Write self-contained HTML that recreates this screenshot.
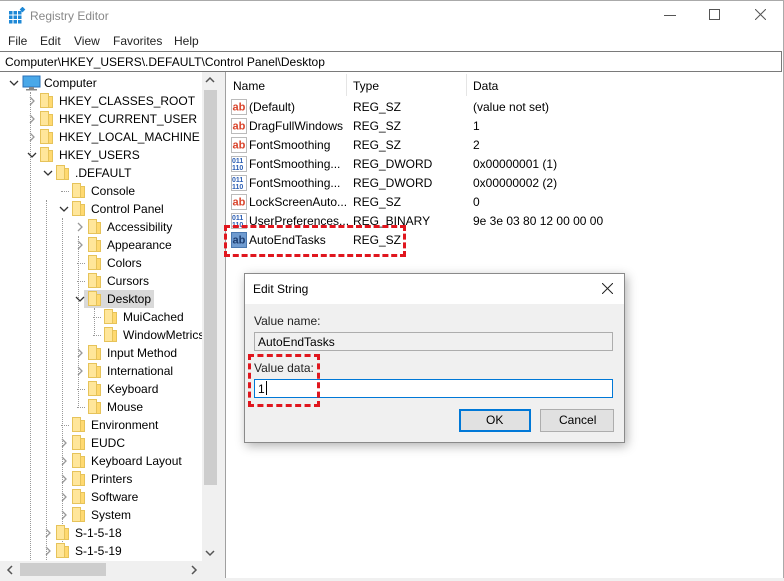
<!DOCTYPE html>
<html><head><meta charset="utf-8"><style>
body{margin:0;width:784px;height:581px;overflow:hidden;background:#fff;font-family:"Liberation Sans",sans-serif;font-size:12px;color:#000;position:relative}
.a{position:absolute;white-space:nowrap}
.t{position:absolute;white-space:nowrap;line-height:18px;height:18px}
</style></head><body>
<div class="a" style="left:0;top:0;width:783px;height:1px;background:#aaa"></div>
<div class="a" style="left:783px;top:0;width:1px;height:581px;background:#aaa"></div>
<svg class="a" style="left:9px;top:7px" width="17" height="17"><g fill="#1e88d6"><rect x="0" y="4" width="3.5" height="3.5"/><rect x="4.5" y="4" width="3.5" height="3.5"/><rect x="9" y="4" width="3.5" height="3.5"/><rect x="0" y="8.5" width="3.5" height="3.5"/><rect x="4.5" y="8.5" width="3.5" height="3.5"/><rect x="9" y="8.5" width="3.5" height="3.5"/><rect x="0" y="13" width="3.5" height="3.5"/><rect x="4.5" y="13" width="3.5" height="3.5"/><rect x="9" y="13" width="3.5" height="3.5"/><rect x="11.5" y="0.5" width="4" height="4" transform="rotate(45 13.5 2.5)"/></g></svg>
<div class="a" style="left:30px;top:9px;font-size:12px;color:#888">Registry Editor</div>
<div class="a" style="left:664px;top:15px;width:12px;height:1px;background:#555"></div>
<div class="a" style="left:709px;top:9px;width:9px;height:9px;border:1px solid #555"></div>
<svg class="a" style="left:755px;top:9px" width="11" height="11"><path d="M0 0L11 11M11 0L0 11" stroke="#555"/></svg>
<div class="a" style="left:8px;top:34px;color:#222">File</div>
<div class="a" style="left:40px;top:34px;color:#222">Edit</div>
<div class="a" style="left:74px;top:34px;color:#222">View</div>
<div class="a" style="left:113px;top:34px;color:#222">Favorites</div>
<div class="a" style="left:174px;top:34px;color:#222">Help</div>
<div class="a" style="left:0;top:51px;width:781px;height:19px;border:1px solid #7a7a7a;border-left:none"></div>
<div class="a" style="left:5px;top:55px">Computer\HKEY_USERS\.DEFAULT\Control Panel\Desktop</div>
<div class="a" style="left:0;top:72px;width:202px;height:489px;background:#fff;overflow:hidden">
<div class="a" style="left:84px;top:218px;width:70px;height:18px;background:#d9d9d9"></div>
<div class="a" style="left:30px;top:20px;height:470px;border-left:1px dotted #999"></div>
<div class="a" style="left:46px;top:128px;height:370px;border-left:1px dotted #999"></div>
<div class="a" style="left:62px;top:146px;height:340px;border-left:1px dotted #999"></div>
<div class="a" style="left:78px;top:164px;height:170px;border-left:1px dotted #999"></div>
<div class="a" style="left:94px;top:236px;height:26px;border-left:1px dotted #999"></div>
</div>
<div id="tree"></div>
<script>
var rows=[[0,"Computer",""],[1,"HKEY_CLASSES_ROOT",">"],[1,"HKEY_CURRENT_USER",">"],[1,"HKEY_LOCAL_MACHINE",">"],[1,"HKEY_USERS","v"],[2,".DEFAULT","v"],[3,"Console",""],[3,"Control Panel","v"],[4,"Accessibility",">"],[4,"Appearance",">"],[4,"Colors",""],[4,"Cursors",""],[4,"Desktop","v"],[5,"MuiCached",""],[5,"WindowMetrics",""],[4,"Input Method",">"],[4,"International",">"],[4,"Keyboard",""],[4,"Mouse",""],[3,"Environment",""],[3,"EUDC",">"],[3,"Keyboard Layout",">"],[3,"Printers",">"],[3,"Software",">"],[3,"System",">"],[2,"S-1-5-18",">"],[2,"S-1-5-19",">"]];
var h="";
rows.forEach(function(r,i){var top=74+18*i,L=r[0];
if(L==0){h+='<svg class="a" style="left:9px;top:'+(top+6)+'px" width="10" height="8"><path d="M1 1L5 5L9 1" stroke="#333" fill="none" stroke-width="1.3"/></svg>';
h+='<svg class="a" style="left:22px;top:'+(top+1)+'px" width="19" height="16"><rect x="1" y="1" width="17" height="11" fill="#4aa8e8" stroke="#2a70b8"/><rect x="7" y="12" width="5" height="2" fill="#888"/><rect x="4" y="14" width="11" height="1.5" fill="#888"/></svg>';
h+='<div class="t" style="left:44px;top:'+top+'px">Computer</div>';return;}
var fx=24+16*L,tx=fx+19,cx=fx-12;
if(r[2]==">")h+='<svg class="a" style="left:'+cx+'px;top:'+(top+4)+'px" width="8" height="10"><path d="M2 1L6 5L2 9" stroke="#999" fill="none" stroke-width="1.3"/></svg>';
if(r[2]=="v")h+='<svg class="a" style="left:'+(cx-1)+'px;top:'+(top+6)+'px" width="10" height="8"><path d="M1 1L5 5L9 1" stroke="#333" fill="none" stroke-width="1.3"/></svg>';
if(r[2]=="")h+='<div class="a" style="left:'+(cx+1)+'px;top:'+(top+9)+'px;width:8px;border-top:1px dotted #999"></div>';
h+='<svg class="a" style="left:'+fx+'px;top:'+(top+1)+'px" width="13" height="17"><path d="M0.5 0.5H8.5V14.5H0.5Z" fill="#ffe69a" stroke="#e6c35a"/><path d="M8.5 3.5V14.5H12.5V3.5Z" fill="#ffd970" stroke="#e6c35a"/></svg>';
h+='<div class="t" style="left:'+tx+'px;top:'+top+'px">'+r[1]+'</div>';});
document.getElementById('tree').innerHTML='<div class="a" style="left:0;top:0;width:202px;height:561px;overflow:hidden">'+h+'</div>';
</script>
<div class="a" style="left:202px;top:72px;width:17px;height:489px;background:#f0f0f0"></div>
<div class="a" style="left:204px;top:90px;width:13px;height:395px;background:#cdcdcd"></div>
<svg class="a" style="left:205px;top:76px" width="10" height="8"><path d="M1 6L5 2L9 6" stroke="#555" fill="none" stroke-width="1.5"/></svg>
<svg class="a" style="left:205px;top:549px" width="10" height="8"><path d="M1 2L5 6L9 2" stroke="#555" fill="none" stroke-width="1.5"/></svg>
<div class="a" style="left:0;top:561px;width:219px;height:17px;background:#f0f0f0"></div>
<div class="a" style="left:20px;top:563px;width:86px;height:13px;background:#cdcdcd"></div>
<svg class="a" style="left:6px;top:565px" width="8" height="10"><path d="M6 1L2 5L6 9" stroke="#555" fill="none" stroke-width="1.5"/></svg>
<svg class="a" style="left:190px;top:565px" width="8" height="10"><path d="M2 1L6 5L2 9" stroke="#555" fill="none" stroke-width="1.5"/></svg>
<div class="a" style="left:0;top:578px;width:784px;height:3px;background:#f0f0f0"></div>
<div class="a" style="left:219px;top:72px;width:6px;height:509px;background:#f0f0f0"></div>
<div class="a" style="left:225px;top:72px;width:1px;height:506px;background:#a0a0a0"></div>
<div class="a" style="left:346px;top:74px;width:1px;height:22px;background:#e5e5e5"></div>
<div class="a" style="left:466px;top:74px;width:1px;height:22px;background:#e5e5e5"></div>
<div class="a" style="left:233px;top:79px">Name</div>
<div class="a" style="left:353px;top:79px">Type</div>
<div class="a" style="left:473px;top:79px">Data</div>
<div id="list"></div>
<script>
var L=[["s","(Default)","REG_SZ","(value not set)"],["s","DragFullWindows","REG_SZ","1"],["s","FontSmoothing","REG_SZ","2"],["b","FontSmoothing...","REG_DWORD","0x00000001 (1)"],["b","FontSmoothing...","REG_DWORD","0x00000002 (2)"],["s","LockScreenAuto...","REG_SZ","0"],["b","UserPreferences...","REG_BINARY","9e 3e 03 80 12 00 00 00"],["n","AutoEndTasks","REG_SZ",""]];
var h="";L.forEach(function(r,i){var top=98+19*i;
if(r[0]=="s")h+='<svg class="a" style="left:231px;top:'+(top+1)+'px" width="16" height="16"><path d="M0.5 0.5H15.5V15.5H0.5Z" fill="#fff" stroke="#bbb"/><text x="1.5" y="11.5" font-family="Liberation Sans" font-size="11" font-weight="bold" fill="#d9432a">ab</text></svg>';
else if(r[0]=="b")h+='<svg class="a" style="left:231px;top:'+(top+1)+'px" width="16" height="16"><path d="M0.5 0.5H15.5V15.5H0.5Z" fill="#fff" stroke="#bbb"/><text x="1" y="7" font-family="Liberation Sans" font-size="7" font-weight="bold" fill="#2d5fb4">011</text><text x="1" y="14" font-family="Liberation Sans" font-size="7" font-weight="bold" fill="#2d5fb4">110</text></svg>';
else h+='<svg class="a" style="left:231px;top:'+(top+1)+'px" width="16" height="16"><path d="M0.5 0.5H15.5V15.5H0.5Z" fill="#6f9bd0" stroke="#4a78b0"/><text x="1.5" y="11.5" font-family="Liberation Sans" font-size="11" font-weight="bold" fill="#1d3d70">ab</text></svg>';
h+='<div class="t" style="left:249px;top:'+top+'px">'+r[1]+'</div><div class="t" style="left:353px;top:'+top+'px">'+r[2]+'</div><div class="t" style="left:473px;top:'+top+'px">'+r[3]+'</div>';});
document.getElementById('list').innerHTML=h;
</script>
<div class="a" style="left:224px;top:225px;width:176px;height:26px;border:3px dashed #e0161e"></div>
<div class="a" style="left:244px;top:273px;width:379px;height:168px;background:#f0f0f0;border:1px solid #8a8a8a;box-shadow:2px 3px 10px rgba(0,0,0,0.3)"></div>
<div class="a" style="left:245px;top:274px;width:379px;height:30px;background:#fff"></div>
<div class="a" style="left:253px;top:282px">Edit String</div>
<svg class="a" style="left:602px;top:283px" width="11" height="11"><path d="M0 0L11 11M11 0L0 11" stroke="#222"/></svg>
<div class="a" style="left:254px;top:314px;color:#222">Value name:</div>
<div class="a" style="left:254px;top:332px;width:357px;height:17px;background:#f0f0f0;border:1px solid #adadad"></div>
<div class="a" style="left:258px;top:335px">AutoEndTasks</div>
<div class="a" style="left:254px;top:361px;color:#222">Value data:</div>
<div class="a" style="left:254px;top:379px;width:357px;height:17px;background:#fff;border:1px solid #0078d7"></div>
<div class="a" style="left:258px;top:382px">1</div>
<div class="a" style="left:266px;top:381px;width:1px;height:14px;background:#000"></div>
<div class="a" style="left:459px;top:409px;width:68px;height:19px;background:#e1e1e1;border:2px solid #0078d7"></div>
<div class="a" style="left:486px;top:413px">OK</div>
<div class="a" style="left:540px;top:409px;width:72px;height:21px;background:#e1e1e1;border:1px solid #adadad"></div>
<div class="a" style="left:559px;top:413px">Cancel</div>
<div class="a" style="left:248px;top:354px;width:66px;height:47px;border:3px dashed #e0161e"></div>
</body></html>
